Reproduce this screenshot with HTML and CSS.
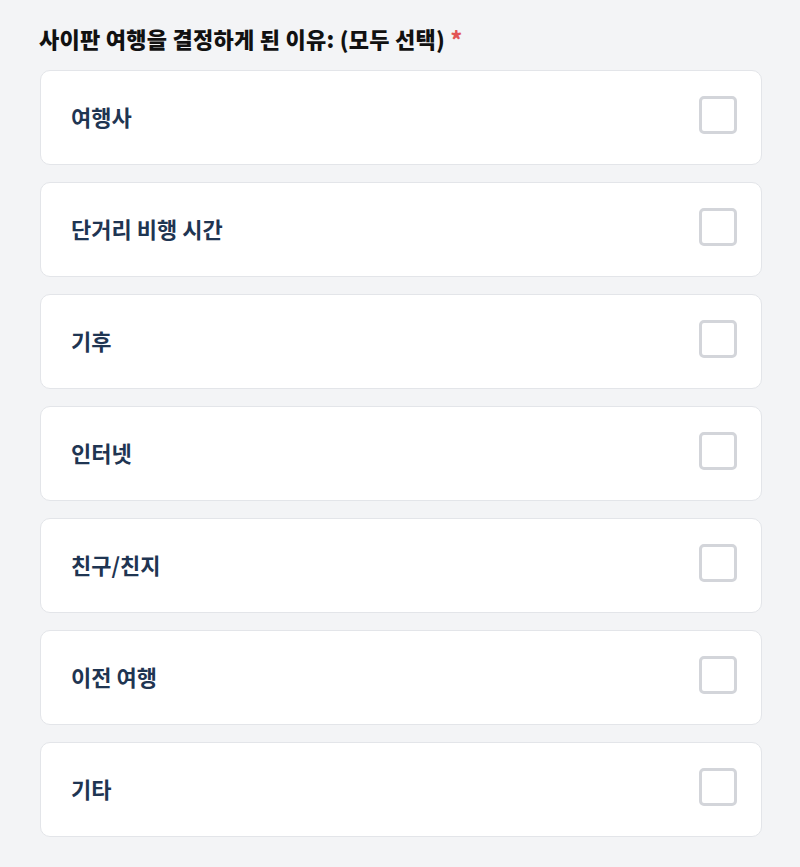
FILE: index.html
```html
<!DOCTYPE HTML>
<html>
	<head>
		<meta charset="utf-8">
		<link rel="stylesheet" href="styles.css">
	</head>
	<body>
		<div class="question">
			<div class="question-title">사이판 여행을 결정하게 된 이유: (모두 선택) <span class="required">*</span></div>
			<div class="options">
				<label class="option"><span class="option-text">여행사</span><span class="checkbox"></span></label>
				<label class="option"><span class="option-text">단거리 비행 시간</span><span class="checkbox"></span></label>
				<label class="option"><span class="option-text">기후</span><span class="checkbox"></span></label>
				<label class="option"><span class="option-text">인터넷</span><span class="checkbox"></span></label>
				<label class="option"><span class="option-text">친구/친지</span><span class="checkbox"></span></label>
				<label class="option"><span class="option-text">이전 여행</span><span class="checkbox"></span></label>
				<label class="option"><span class="option-text">기타</span><span class="checkbox"></span></label>
			</div>
		</div>
	</body>
</html>
```

FILE: styles.css
```css
body {
	margin: 0;
	background: #f3f4f6;
	font-family: "Noto Sans CJK KR", "Noto Sans", sans-serif;
}
.question {
	padding: 22px 38px 0 40px;
}
.question-title {
	font-size: 22px;
	font-weight: 800;
	letter-spacing: 0.25px;
	line-height: 32px;
	color: #111;
	margin-left: -1px;
	margin-bottom: 16px;
}
.required {
	color: #e25555;
}
.options {
	display: flex;
	flex-direction: column;
	gap: 17px;
}
.option {
	display: flex;
	align-items: center;
	justify-content: space-between;
	box-sizing: border-box;
	height: 95px;
	padding: 0 24px 0 30px;
	background: #fff;
	border: 1px solid #e3e5e9;
	border-radius: 10px;
}
.option-text {
	font-size: 22px;
	font-weight: bold;
	color: #1f3552;
	margin-bottom: 3px;
}
.checkbox {
	box-sizing: border-box;
	width: 38px;
	height: 38px;
	border: 3px solid #d3d5da;
	border-radius: 5px;
	margin-bottom: 6px;
}
```
